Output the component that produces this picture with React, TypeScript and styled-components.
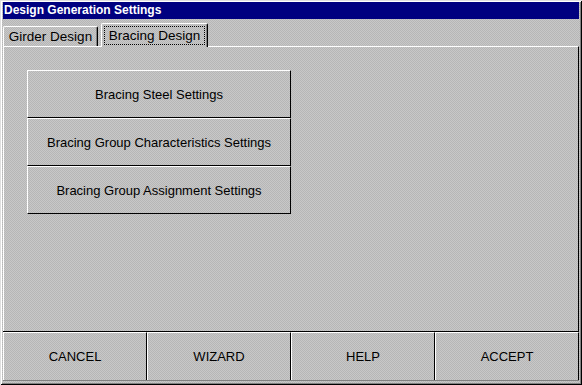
import React from "react";
import styled, { createGlobalStyle, css } from "styled-components";

const Global = createGlobalStyle`
  html, body { margin: 0; padding: 0; background: #c0c0c0; }
  body { font-family: "Liberation Sans", Arial, sans-serif; }
`;

const dither = css`
  background-color: #c0c0c0;
  background-image: repeating-conic-gradient(#c8c8c8 0 25%, #b6b6b6 0 50%);
  background-size: 2px 2px;
`;

const Window = styled.div`
  ${dither};
  width: 582px;
  height: 385px;
  box-sizing: border-box;
  padding: 2px 3px 3px 3px;
  display: flex;
  flex-direction: column;
  box-shadow: inset 1px 1px 0 #dfdfdf, inset -1px -1px 0 #000, inset 2px 2px 0 #fff, inset -2px -2px 0 #808080;
`;

const TitleBar = styled.div`
  height: 17px;
  background: #000080;
  color: #fff;
  font-family: "Liberation Sans", Arial, sans-serif;
  font-weight: bold;
  font-size: 12px;
  line-height: 17px;
  padding-left: 1px;
  white-space: nowrap;
`;

const TabRow = styled.div`
  height: 27px;
  display: flex;
  align-items: flex-end;
  position: relative;
`;

const Tab = styled.div<{ $active?: boolean }>`
  ${dither};
  box-sizing: border-box;
  height: ${(p) => (p.$active ? 24 : 20)}px;
  margin-bottom: ${(p) => (p.$active ? -1 : 0)}px;
  border-top: 1px solid #fff;
  border-left: 1px solid #fff;
  border-right: 1px solid #000;
  box-shadow: inset -1px 0 0 #808080;
  border-radius: 2px 2px 0 0;
  display: flex;
  align-items: center;
  justify-content: center;
  font-size: 13.5px;
  color: #000;
  padding: ${(p) => (p.$active ? "0 2px" : "0 4px")};
  margin-right: ${(p) => (p.$active ? 0 : 3)}px;
  position: relative;
  z-index: ${(p) => (p.$active ? 2 : 1)};
  width: ${(p) => (p.$active ? 107 : 95)}px;
  white-space: nowrap;
`;

const Focus = styled.span`
  box-sizing: border-box;
  display: flex;
  align-items: center;
  justify-content: center;
  width: 100%;
  height: 19px;
  border: 1px dotted #000;
`;

const Panel = styled.div`
  flex: 1;
  border-top: 1px solid #fff;
  border-left: 1px solid #fff;
  border-right: 1px solid #000;
  padding: 23px 0 0 23px;
`;

const ButtonStack = styled.div`
  display: flex;
  flex-direction: column;
  width: 264px;
`;

const StackButton = styled.div`
  box-sizing: border-box;
  height: 48px;
  border-top: 1px solid #fff;
  border-left: 1px solid #fff;
  border-right: 1px solid #000;
  border-bottom: 1px solid #000;
  display: flex;
  align-items: center;
  justify-content: center;
  font-size: 13px;
  color: #000;
  white-space: nowrap;
`;

const BottomBar = styled.div`
  display: grid;
  grid-template-columns: repeat(4, 144px);
  height: 48px;
  border-top: 1px solid #000;
  border-bottom: 1px solid #808080;
  margin-bottom: 1px;
`;

const BarButton = styled.div`
  box-sizing: border-box;
  border-top: 1px solid #fff;
  border-left: 1px solid #fff;
  border-right: 1px solid #000;
  display: flex;
  align-items: center;
  justify-content: center;
  font-size: 13px;
  color: #000;
`;

export default function App() {
  return (
    <>
      <Global />
      <Window>
        <TitleBar>Design Generation Settings</TitleBar>
        <TabRow>
          <Tab>Girder Design</Tab>
          <Tab $active>
            <Focus>Bracing Design</Focus>
          </Tab>
        </TabRow>
        <Panel>
          <ButtonStack>
            <StackButton>Bracing Steel Settings</StackButton>
            <StackButton>Bracing Group Characteristics Settings</StackButton>
            <StackButton>Bracing Group Assignment Settings</StackButton>
          </ButtonStack>
        </Panel>
        <BottomBar>
          <BarButton>CANCEL</BarButton>
          <BarButton>WIZARD</BarButton>
          <BarButton>HELP</BarButton>
          <BarButton>ACCEPT</BarButton>
        </BottomBar>
      </Window>
    </>
  );
}
